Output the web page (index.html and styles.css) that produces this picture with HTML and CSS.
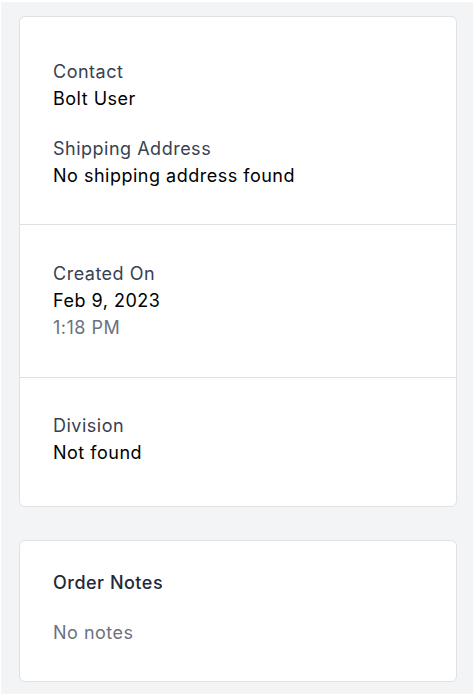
FILE: index.html
```html
<!DOCTYPE html>
<html lang="en">
<head>
    <meta charset="UTF-8">
    <meta name="viewport" content="width=device-width, initial-scale=1.0">
    <title>Order Details</title>
    <link rel="stylesheet" href="styles.css">
</head>
<body>
    <div class="page">
        <!-- Order summary card -->
        <div class="card">
            <div class="section section-first">
                <div class="field">
                    <div class="label">Contact</div>
                    <div class="value">Bolt User</div>
                </div>
                <div class="field">
                    <div class="label">Shipping Address</div>
                    <div class="value">No shipping address found</div>
                </div>
            </div>
            <div class="section section-mid">
                <div class="field">
                    <div class="label">Created On</div>
                    <div class="value">Feb 9, 2023</div>
                    <div class="value muted">1:18 PM</div>
                </div>
            </div>
            <div class="section section-last">
                <div class="field">
                    <div class="label">Division</div>
                    <div class="value">Not found</div>
                </div>
            </div>
        </div>

        <!-- Notes card -->
        <div class="card notes">
            <div class="notes-title">Order Notes</div>
            <div class="value muted">No notes</div>
        </div>
    </div>
</body>
</html>
```

FILE: styles.css
```css
* {
    margin: 0;
    padding: 0;
    box-sizing: border-box;
}

body {
    font-family: Inter, "Noto Sans", sans-serif;
    background-color: #fff;
    color: #000;
    font-size: 18px;
    line-height: 27px;
    letter-spacing: 0.5px;
}

.page {
    margin: 2px 1px 0;
    height: 692px;
    padding: 14px 16px 0 18px;
    background-color: #f3f4f6;
    display: flex;
    flex-direction: column;
    gap: 33px;
}

.card {
    background: #fff;
    border: 1px solid #dfe1e5;
    border-radius: 6px;
}

.section {
    padding: 35px 33px;
    border-bottom: 1px solid #dfe1e5;
    display: flex;
    flex-direction: column;
    gap: 23px;
}

.section-first {
    padding-top: 41px;
}

.section-mid {
    padding-bottom: 36px;
}

.section-last {
    border-bottom: none;
    padding-top: 34px;
    padding-bottom: 40px;
}

.label {
    color: #374151;
}

.value {
    color: #000;
}

.muted {
    color: #6b7280;
}

.notes {
    padding: 28px 33px 35px;
    display: flex;
    flex-direction: column;
    gap: 23px;
}

.notes-title {
    color: #1f2937;
    font-weight: 500;
}
```
